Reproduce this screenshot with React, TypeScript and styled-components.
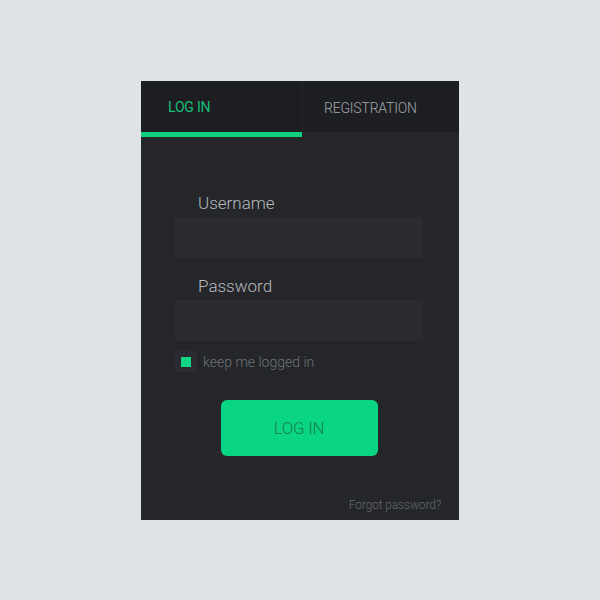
import { useState } from 'react'
import styled, { createGlobalStyle } from 'styled-components'

const GlobalStyle = createGlobalStyle`
	html, body {
		margin: 0;
		padding: 0;
		background: #dfe3e6;
		font-family: Roboto, 'Liberation Sans', sans-serif;
	}
`

const Page = styled.div`
	width: 600px;
	height: 600px;
	display: flex;
	justify-content: center;
	padding-top: 81px;
	box-sizing: border-box;
`

const Card = styled.div`
	width: 318px;
	height: 439px;
	background: #24262a;
	display: flex;
	flex-direction: column;
`

const Tabs = styled.div`
	display: grid;
	grid-template-columns: 161px 1fr;
	align-items: start;
	height: 56px;
`

const Tab = styled.button<{ $active?: boolean }>`
	height: ${p => (p.$active ? '56px' : '51px')};
	background: #1c1e21;
	border: none;
	border-left: ${p => (p.$active ? 'none' : '1px solid #25272b')};
	border-bottom: ${p => (p.$active ? '5px solid #0fd07f' : 'none')};
	color: ${p => (p.$active ? '#19bf79' : '#a3a6ab')};
	font-family: Roboto, 'Liberation Sans', sans-serif;
	font-weight: ${p => (p.$active ? 400 : 300)};
	font-size: 14px;
	letter-spacing: -0.2px;
	text-transform: uppercase;
	text-align: left;
	padding: 0 0 0 ${p => (p.$active ? '27px' : '21px')};
	padding-top: ${p => (p.$active ? '1px' : '3px')};
	cursor: pointer;
`

const Form = styled.form`
	display: flex;
	flex-direction: column;
	padding: 56px 36px 0 34px;
	flex: 1;
`

const Label = styled.label`
	color: #b8babe;
	font-weight: 300;
	font-size: 17px;
	padding-left: 23px;
	line-height: 20px;
	margin-bottom: 4px;
`

const Input = styled.input`
	height: 41px;
	background: #2a2c31;
	border: none;
	outline: none;
	color: #ccc;
	padding: 0 12px;
	font-family: inherit;
	font-size: 15px;
	margin-bottom: 18px;
`

const CheckRow = styled.label`
	display: flex;
	align-items: center;
	gap: 6px;
	margin-top: -8px;
	cursor: pointer;
`

const CheckBox = styled.span`
	width: 22px;
	height: 21px;
	background: #2a2c31;
	display: flex;
	align-items: center;
	justify-content: center;
`

const CheckMark = styled.span<{ $on: boolean }>`
	width: 10px;
	height: 10px;
	background: ${p => (p.$on ? '#12d583' : 'transparent')};
`

const CheckText = styled.span`
	color: #6f7277;
	font-weight: 300;
	font-size: 14px;
`

const Submit = styled.button`
	align-self: center;
	margin: 28px 0 0 0;
	width: 157px;
	height: 56px;
	border: none;
	border-radius: 6px;
	background: #0ad584;
	color: #16804f;
	font-family: Roboto, 'Liberation Sans', sans-serif;
	font-weight: 300;
	font-size: 17px;
	letter-spacing: -0.3px;
	cursor: pointer;
`

const Forgot = styled.a`
	align-self: flex-end;
	margin: auto -18px 8px 0;
	color: #65686d;
	font-size: 12px;
	font-weight: 300;
	letter-spacing: -0.15px;
	text-decoration: none;
`

const App = () => {
	const [tab, setTab] = useState('login')
	const [keep, setKeep] = useState(true)

	return (
		<>
			<GlobalStyle />
			<Page>
				<Card>
					<Tabs>
						<Tab $active={tab === 'login'} onClick={() => setTab('login')}>
							Log in
						</Tab>
						<Tab $active={tab === 'register'} onClick={() => setTab('register')}>
							Registration
						</Tab>
					</Tabs>
					<Form onSubmit={e => e.preventDefault()}>
						<Label htmlFor="username">Username</Label>
						<Input id="username" type="text" />
						<Label htmlFor="password">Password</Label>
						<Input id="password" type="password" />
						<CheckRow onClick={() => setKeep(k => !k)}>
							<CheckBox>
								<CheckMark $on={keep} />
							</CheckBox>
							<CheckText>keep me logged in</CheckText>
						</CheckRow>
						<Submit type="submit">LOG IN</Submit>
						<Forgot href="#">Forgot password?</Forgot>
					</Form>
				</Card>
			</Page>
		</>
	)
}

export default App
